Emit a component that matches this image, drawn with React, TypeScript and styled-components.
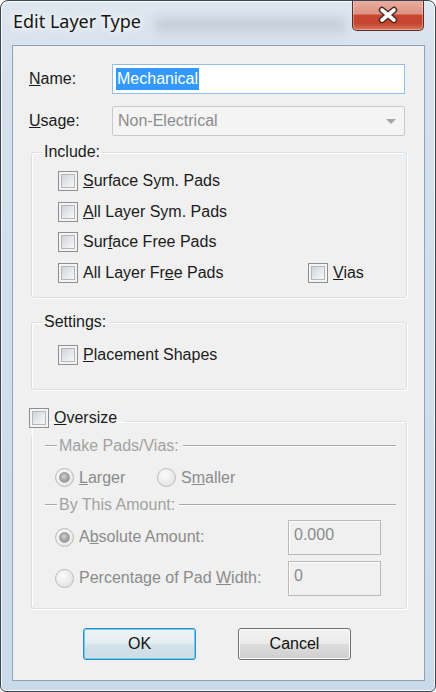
import styled, { createGlobalStyle } from "styled-components";

const Global = createGlobalStyle`
  html, body {
    margin: 0;
    padding: 0;
    background: #ffffff;
  }
  body {
    font-family: "Liberation Sans", Arial, sans-serif;
  }
  * {
    box-sizing: border-box;
  }
`;

const Window = styled.div`
  width: 436px;
  height: 692px;
  display: flex;
  flex-direction: column;
  border: 1px solid #3b4652;
  border-radius: 8px 8px 6px 6px;
  padding: 0 10px 10px 11px;
  background: linear-gradient(180deg, #dfe7ef 0px, #d6e1ec 60px, #cbdaea 100%);
  box-shadow: inset 0 0 0 1px rgba(255, 255, 255, 0.8);
  overflow: hidden;
`;

const TitleBar = styled.div`
  height: 44px;
  flex-shrink: 0;
  display: flex;
  align-items: flex-start;
`;

const Title = styled.div`
  font-family: "Noto Sans", "Open Sans", sans-serif;
  font-size: 18px;
  color: #151515;
  padding: 8px 0 0 1px;
  text-shadow: 0 0 6px #ffffff, 0 0 10px #ffffff;
`;

const Backdrop = styled.div`
  width: 190px;
  height: 16px;
  margin: 16px 0 0 14px;
  background: rgba(70, 80, 95, 0.13);
  filter: blur(5px);
`;

const Close = styled.div`
  margin: -1px 1px 0 auto;
  width: 72px;
  height: 31px;
  border: 1px solid #5e2a22;
  border-top: none;
  border-radius: 0 0 5px 5px;
  background: linear-gradient(
    180deg,
    #eab0a2 0%,
    #de9383 45%,
    #c7452e 52%,
    #c54631 78%,
    #d8775c 100%
  );
  box-shadow: inset 0 0 0 1px rgba(255, 255, 255, 0.35);
  display: flex;
  align-items: center;
  justify-content: center;
`;

const Client = styled.div`
  flex: 1;
  display: flex;
  flex-direction: column;
  background: #f0f0f0;
  border: 1px solid #8fa3b8;
  padding: 18px 17px 0 16px;
  color: #1b1b1b;
  font-size: 16px;
`;

const FieldRow = styled.div<{ $gap?: number }>`
  display: flex;
  align-items: center;
  height: 30px;
  margin: ${(p) => p.$gap ?? 0}px 2px 0 0;
`;

const FieldLabel = styled.label`
  width: 83px;
  flex-shrink: 0;
`;

const TextBox = styled.div`
  flex: 1;
  height: 30px;
  display: flex;
  align-items: center;
  padding: 0 3px;
  background: #ffffff;
  border: 1px solid #8dc0ec;
`;

const Selected = styled.span`
  background: #3399ff;
  color: #ffffff;
  line-height: 22px;
  padding: 0 1px;
`;

const Combo = styled.div`
  flex: 1;
  height: 30px;
  display: flex;
  align-items: center;
  justify-content: space-between;
  padding: 0 8px 0 5px;
  background: #f4f4f4;
  border: 1px solid #c9c9c9;
  border-radius: 2px;
  color: #8c8c8c;
`;

const Arrow = styled.span`
  width: 0;
  height: 0;
  border-left: 5px solid transparent;
  border-right: 5px solid transparent;
  border-top: 5px solid #a6a6a6;
`;

const Group = styled.fieldset<{ $gap: number }>`
  margin: ${(p) => p.$gap}px 0 0 2px;
  padding: 0;
  min-width: 0;
  border: 1px solid #d8e0e6;
  border-radius: 3px;
  box-shadow: inset 1px 1px 0 #ffffff, 1px 1px 0 #ffffff;
`;

const Legend = styled.legend`
  margin-left: 10px;
  padding: 0 2px;
  line-height: 18px;
`;

const CheckLegend = styled.legend`
  margin-left: -3px;
  padding: 0 8px 4px 0;
`;

const GroupBody = styled.div<{ $pad: string }>`
  padding: ${(p) => p.$pad};
`;

const CheckGrid = styled.div`
  display: grid;
  grid-template-columns: 250px auto;
  grid-auto-rows: 30.5px;
  align-items: center;
`;

const Option = styled.label<{ $width?: number; $disabled?: boolean }>`
  display: inline-flex;
  align-items: center;
  gap: 5px;
  height: 22px;
  width: ${(p) => (p.$width ? `${p.$width}px` : "auto")};
  color: ${(p) => (p.$disabled ? "#8b8b8b" : "#1b1b1b")};
  white-space: nowrap;
`;

const Box = styled.span`
  position: relative;
  width: 20px;
  height: 20px;
  flex-shrink: 0;
  border: 1px solid #8f8f8f;
  background: #f4f4f4;
  &::after {
    content: "";
    position: absolute;
    inset: 2px;
    border: 1px solid #b4b8bd;
    background: linear-gradient(135deg, #cfd2d6 0%, #e6e7e9 50%, #f7f7f7 100%);
  }
`;

const Radio = styled.span<{ $checked?: boolean }>`
  position: relative;
  width: 19px;
  height: 19px;
  flex-shrink: 0;
  border-radius: 50%;
  border: 1px solid #bcbcbc;
  background: radial-gradient(circle at 40% 35%, #fbfbfb 0%, #e9e9e9 60%, #dadada 100%);
  &::after {
    content: "";
    display: ${(p) => (p.$checked ? "block" : "none")};
    position: absolute;
    inset: 3px;
    border-radius: 50%;
    border: 1px solid #9a9a9a;
    background: radial-gradient(circle at 45% 40%, #d4d4d4 0%, #a9a9a9 45%, #8f8f8f 100%);
    box-shadow: 0 0 0 1px #f6f6f6;
  }
`;

const Sep = styled.div<{ $gap?: number }>`
  display: flex;
  align-items: center;
  height: 18px;
  gap: 2px;
  margin-top: ${(p) => p.$gap ?? 0}px;
  color: #a2a2a2;
  &::before,
  &::after {
    content: "";
    height: 1px;
    background: #a8a8a8;
    box-shadow: 0 1px 0 #ffffff;
  }
  &::before {
    width: 12px;
  }
  &::after {
    flex: 1;
    margin-left: 2px;
  }
`;

const Indent = styled.div<{ $gap: number }>`
  display: flex;
  align-items: center;
  margin: ${(p) => p.$gap}px 0 0 10px;
`;

const AmountRow = styled(Indent)`
  height: 35px;
`;

const RadioRow = styled(Indent)`
  height: 30px;
`;

const Amount = styled.div`
  width: 93px;
  height: 35px;
  padding: 5px 5px 0;
  border: 1px solid #b9b9b9;
  box-shadow: inset 1px 1px 0 #ffffff;
  background: #f0f0f0;
  color: #8c8c8c;
  line-height: 18px;
`;

const Buttons = styled.div`
  display: flex;
  justify-content: center;
  gap: 42px;
  margin: 19px 2px 0 0;
`;

const Button = styled.button<{ $default?: boolean }>`
  width: 113px;
  height: 32px;
  font-family: "Liberation Sans", Arial, sans-serif;
  font-size: 16px;
  color: #111;
  border-radius: 3px;
  border: 1px solid ${(p) => (p.$default ? "#3a86bd" : "#707070")};
  background: ${(p) =>
    p.$default
      ? "linear-gradient(180deg, #eef4f8 0%, #e4edf2 50%, #d6e3ea 51%, #cddbe4 100%)"
      : "linear-gradient(180deg, #f2f2f2 0%, #ebebeb 50%, #dddddd 51%, #cfcfcf 100%)"};
  box-shadow: inset 0 0 0 1px ${(p) => (p.$default ? "#5fd2f8" : "#fbfbfb")};
`;

const CloseIcon = () => (
  <svg width="26" height="18" viewBox="0 0 26 18">
    <path d="M7 4 L19 14 M19 4 L7 14" stroke="#4a2620" strokeWidth="6.4" strokeLinecap="round" />
    <path d="M7 4 L19 14 M19 4 L7 14" stroke="#ffffff" strokeWidth="3.6" strokeLinecap="round" />
  </svg>
);

const Check = ({ children, width }: { children: React.ReactNode; width?: number }) => (
  <Option $width={width}>
    <Box />
    <span>{children}</span>
  </Option>
);

const RadioOption = ({
  children,
  checked,
  width,
}: {
  children: React.ReactNode;
  checked?: boolean;
  width?: number;
}) => (
  <Option $disabled $width={width}>
    <Radio $checked={checked} />
    <span>{children}</span>
  </Option>
);

export default function App() {
  return (
    <>
      <Global />
      <Window>
        <TitleBar>
          <Title>Edit Layer Type</Title>
          <Backdrop />
          <Close>
            <CloseIcon />
          </Close>
        </TitleBar>
        <Client>
          <FieldRow>
            <FieldLabel>
              <u>N</u>ame:
            </FieldLabel>
            <TextBox>
              <Selected>Mechanical</Selected>
            </TextBox>
          </FieldRow>
          <FieldRow $gap={12}>
            <FieldLabel>
              <u>U</u>sage:
            </FieldLabel>
            <Combo>
              <span>Non-Electrical</span>
              <Arrow />
            </Combo>
          </FieldRow>

          <Group $gap={7}>
            <Legend>Include:</Legend>
            <GroupBody $pad="5px 0 9px 26px">
              <CheckGrid>
                <Check>
                  <u>S</u>urface Sym. Pads
                </Check>
                <span />
                <Check>
                  <u>A</u>ll Layer Sym. Pads
                </Check>
                <span />
                <Check>
                  Sur<u>f</u>ace Free Pads
                </Check>
                <span />
                <Check>
                  All Layer Fr<u>e</u>e Pads
                </Check>
                <Check>
                  <u>V</u>ias
                </Check>
              </CheckGrid>
            </GroupBody>
          </Group>

          <Group $gap={15}>
            <Legend>Settings:</Legend>
            <GroupBody $pad="9px 0 18px 26px">
              <CheckGrid>
                <Check>
                  <u>P</u>lacement Shapes
                </Check>
              </CheckGrid>
            </GroupBody>
          </Group>

          <Group $gap={17}>
            <CheckLegend>
              <Check>
                <u>O</u>versize
              </Check>
            </CheckLegend>
            <GroupBody $pad="1px 10px 12px 13px">
              <Sep>Make Pads/Vias:</Sep>
              <RadioRow $gap={8}>
                <RadioOption checked width={102}>
                  <u>L</u>arger
                </RadioOption>
                <RadioOption>
                  S<u>m</u>aller
                </RadioOption>
              </RadioRow>
              <Sep $gap={3}>By This Amount:</Sep>
              <AmountRow $gap={6}>
                <RadioOption checked width={233}>
                  A<u>b</u>solute Amount:
                </RadioOption>
                <Amount>0.000</Amount>
              </AmountRow>
              <AmountRow $gap={6}>
                <RadioOption width={233}>
                  Percentage of Pad <u>W</u>idth:
                </RadioOption>
                <Amount>0</Amount>
              </AmountRow>
            </GroupBody>
          </Group>

          <Buttons>
            <Button $default>OK</Button>
            <Button>Cancel</Button>
          </Buttons>
        </Client>
      </Window>
    </>
  );
}
